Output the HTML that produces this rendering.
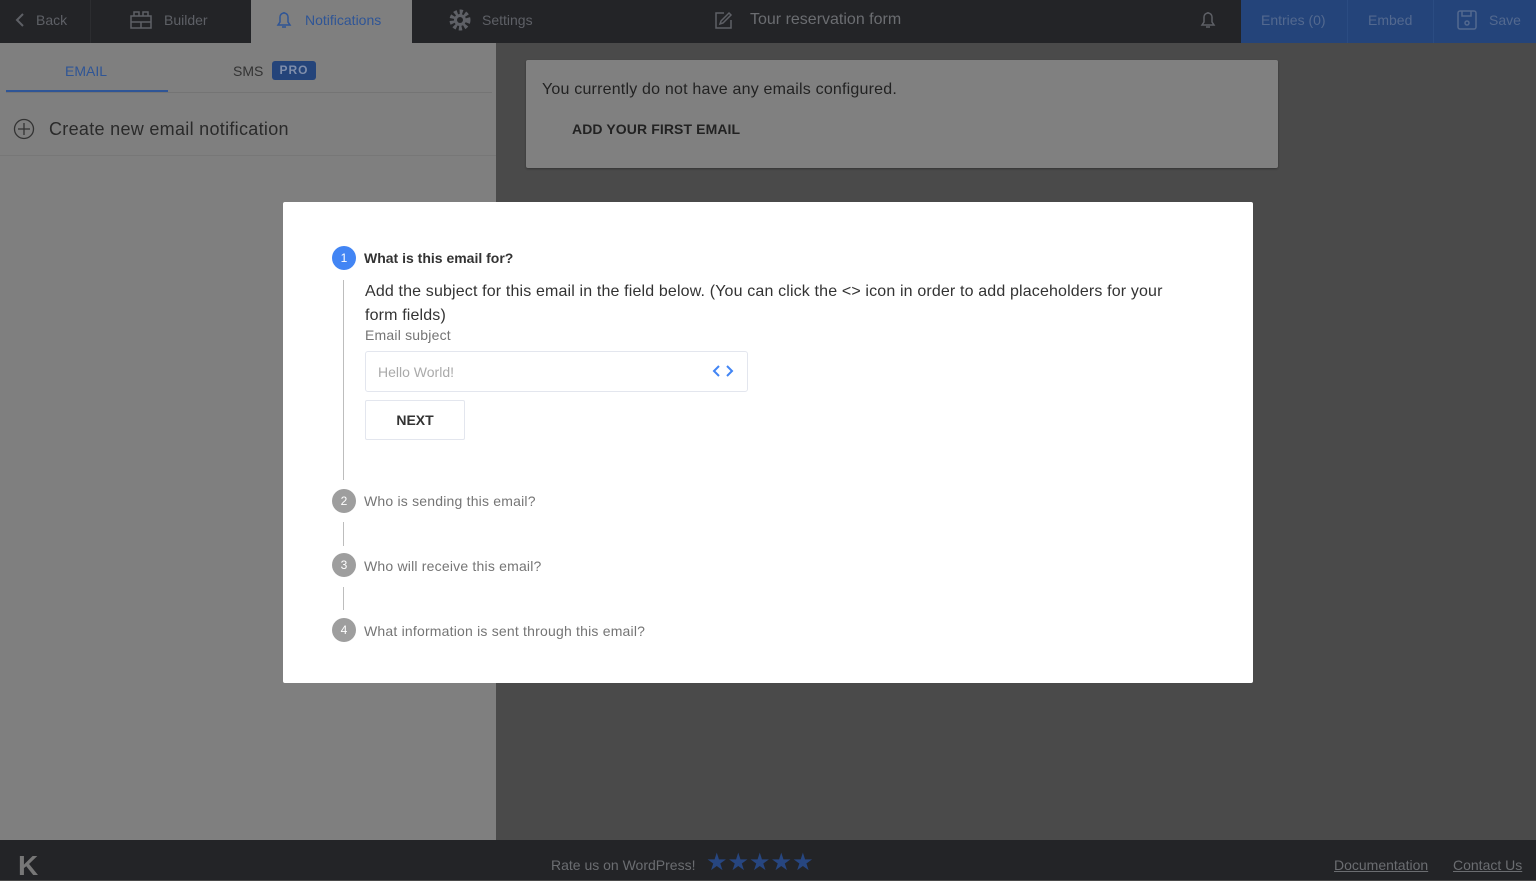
<!DOCTYPE html>
<html><head><meta charset="utf-8"><style>
*{box-sizing:border-box;margin:0;padding:0}
body{width:1536px;height:880px;overflow:hidden;font-family:"Liberation Sans",Arial,sans-serif;background:#4a4a4a;position:relative}
.top{position:absolute;left:0;top:0;width:1536px;height:43px;background:#232427;color:#5e6066;font-size:14px}
.top .it{position:absolute;top:0;height:39px;display:flex;align-items:center;gap:10px}
.left{position:absolute;left:0;top:43px;width:496px;height:797px;background:#7f7f7f}
.foot{position:absolute;left:0;top:840px;width:1536px;height:40px;background:#232427;color:#6b6d71;font-size:14px}
.card{position:absolute;left:526px;top:60px;width:752px;height:108px;background:#808080;border-radius:2px;box-shadow:0 1px 2px rgba(0,0,0,.3)}
.modal{position:absolute;left:283px;top:202px;width:970px;height:481px;background:#fff;border-radius:2px}
.c{position:absolute;width:24px;height:24px;border-radius:50%;color:#fff;font-size:12px;display:flex;align-items:center;justify-content:center;background:#9e9e9e}
.l{position:absolute;left:60px;width:1px;background:#bdbdbd}
.t{position:absolute;left:81px;font-size:14px;color:#757575;letter-spacing:.2px}
</style></head><body>
<div class="top">
 <div class="it" style="left:14px"><svg width="12" height="16"><path d="M9 2L3 8l6 6" stroke="#5e6066" stroke-width="2" fill="none"/></svg>Back</div>
 <div style="position:absolute;left:90px;top:0;width:1px;height:43px;background:#2c2d30"></div>
 <div class="it" style="left:130px"><svg width="22" height="18"><rect x="1" y="5" width="20" height="12" fill="none" stroke="#5e6066" stroke-width="1.5"/><path d="M1 11h20M11 11v6M4 5V1h5v4M13 5V1h5v4" stroke="#5e6066" stroke-width="1.5" fill="none"/></svg><span style="margin-left:2px">Builder</span></div>
 <div style="position:absolute;left:251px;top:0;width:161px;height:43px;background:#7f7f7f"></div>
 <div class="it" style="left:275px;color:#2f5596"><svg width="18" height="20"><path d="M3 15h12l-2-3V7a4 4 0 0 0-8 0v5zM7 17h4M9 2v1" stroke="#2f5596" stroke-width="1.5" fill="none"/></svg><span style="margin-left:2px">Notifications</span></div>
 <div class="it" style="left:448px"><svg width="24" height="24"><circle cx="12" cy="12" r="8" fill="none" stroke="#5e6066" stroke-width="5" stroke-dasharray="3 2.3"/><circle cx="12" cy="12" r="6" fill="#5e6066"/><circle cx="12" cy="12" r="3" fill="#232427"/></svg>Settings</div>
 <div class="it" style="left:714px;font-size:16px;color:#6b6d71"><svg width="20" height="20"><path d="M15 3l2 2-8 8-3 1 1-3zM10 3H2v15h15v-8" stroke="#5e6066" stroke-width="1.5" fill="none"/></svg><span style="margin-left:6px">Tour reservation form</span></div>
 <div class="it" style="left:1199px"><svg width="18" height="20"><path d="M3 15h12l-2-3V7a4 4 0 0 0-8 0v5zM7 17h4M9 2v1" stroke="#5e6066" stroke-width="1.5" fill="none"/></svg></div>
 <div style="position:absolute;left:1241px;top:0;width:295px;height:43px;background:#24447a"></div>
 <div style="position:absolute;left:1347px;top:0;width:1px;height:43px;background:#2b4c82"></div>
 <div style="position:absolute;left:1433px;top:0;width:1px;height:43px;background:#2b4c82"></div>
 <div class="it" style="left:1261px;color:#53698f">Entries (0)</div>
 <div class="it" style="left:1368px;color:#53698f">Embed</div>
 <div class="it" style="left:1457px;color:#53698f"><svg width="20" height="20"><rect x="1" y="1" width="18" height="18" rx="2" fill="none" stroke="#53698f" stroke-width="1.5"/><path d="M5 1v5h9V1" stroke="#53698f" stroke-width="1.5" fill="none"/><circle cx="10" cy="13" r="2" fill="none" stroke="#53698f" stroke-width="1.5"/></svg><span style="margin-left:2px">Save</span></div>
</div>
<div class="left">
 <div style="position:absolute;left:65px;top:20px;font-size:14px;color:#2f5596">EMAIL</div>
 <div style="position:absolute;left:6px;top:47px;width:162px;height:2px;background:#2f5596"></div>
 <div style="position:absolute;left:6px;top:49px;width:486px;height:1px;background:#747474"></div>
 <div style="position:absolute;left:233px;top:20px;font-size:14px;color:#333">SMS</div>
 <div style="position:absolute;left:272px;top:18px;width:44px;height:19px;background:#24447a;border-radius:3px;color:#7f8eab;font-size:12px;font-weight:bold;text-align:center;line-height:19px;letter-spacing:1px">PRO</div>
 <svg style="position:absolute;left:13px;top:75px" width="22" height="22"><circle cx="11" cy="11" r="9.5" fill="none" stroke="#333" stroke-width="1.3"/><path d="M11 5v12M5 11h12" stroke="#333" stroke-width="1.3"/></svg>
 <div style="position:absolute;left:49px;top:76px;font-size:18px;color:#2a2a2a;letter-spacing:.3px">Create new email notification</div>
 <div style="position:absolute;left:0;top:112px;width:496px;height:1px;background:#777"></div>
</div>
<div class="card">
 <div style="position:absolute;left:16px;top:21px;font-size:16px;color:#222;letter-spacing:.2px">You currently do not have any emails configured.</div>
 <div style="position:absolute;left:46px;top:61px;font-size:14px;font-weight:bold;color:#222;letter-spacing:.1px">ADD YOUR FIRST EMAIL</div>
</div>
<div class="foot">
 <div style="position:absolute;left:18px;top:12px;font-size:28px;color:#777;font-weight:bold;line-height:28px">K</div>
 <div style="position:absolute;left:551px;top:17px">Rate us on WordPress!</div>
 <div style="position:absolute;left:706px;top:8px;color:#274680;font-size:24px;letter-spacing:0px">★★★★★</div>
 <div style="position:absolute;left:1334px;top:17px;text-decoration:underline">Documentation</div>
 <div style="position:absolute;left:1453px;top:17px;text-decoration:underline">Contact Us</div>
</div>
<div class="modal">
 <div class="c" style="left:49px;top:44px;background:#4285f4">1</div>
 <div class="t" style="top:48px;color:#333;font-weight:bold;font-size:14px;letter-spacing:0">What is this email for?</div>
 <div class="l" style="top:78px;height:200px"></div>
 <div style="position:absolute;left:82px;top:78px;width:815px;font-size:16px;line-height:24px;color:#333;letter-spacing:.15px">Add the subject for this email in the field below. (You can click the &lt;&gt; icon in order to add placeholders for your form fields)</div>
 <div style="position:absolute;left:82px;top:125px;font-size:14px;color:#757575;letter-spacing:.2px">Email subject</div>
 <div style="position:absolute;left:82px;top:149px;width:383px;height:41px;border:1px solid #e3e6ee;border-radius:3px"></div>
 <div style="position:absolute;left:95px;top:162px;font-size:14px;color:#aaa">Hello World!</div>
 <svg style="position:absolute;left:429px;top:162px" width="22" height="14"><path d="M7 2L2 7l5 5M15 2l5 5-5 5" stroke="#4285f4" stroke-width="2" fill="none"/></svg>
 <div style="position:absolute;left:82px;top:198px;width:100px;height:40px;border:1px solid #e3e6ee;border-radius:2px;text-align:center;line-height:38px;font-size:14px;font-weight:bold;color:#333">NEXT</div>
 <div class="c" style="left:49px;top:287px">2</div>
 <div class="t" style="top:291px">Who is sending this email?</div>
 <div class="l" style="top:320px;height:24px"></div>
 <div class="c" style="left:49px;top:351px">3</div>
 <div class="t" style="top:356px">Who will receive this email?</div>
 <div class="l" style="top:385px;height:23px"></div>
 <div class="c" style="left:49px;top:416px">4</div>
 <div class="t" style="top:421px">What information is sent through this email?</div>
</div>
</body></html>
